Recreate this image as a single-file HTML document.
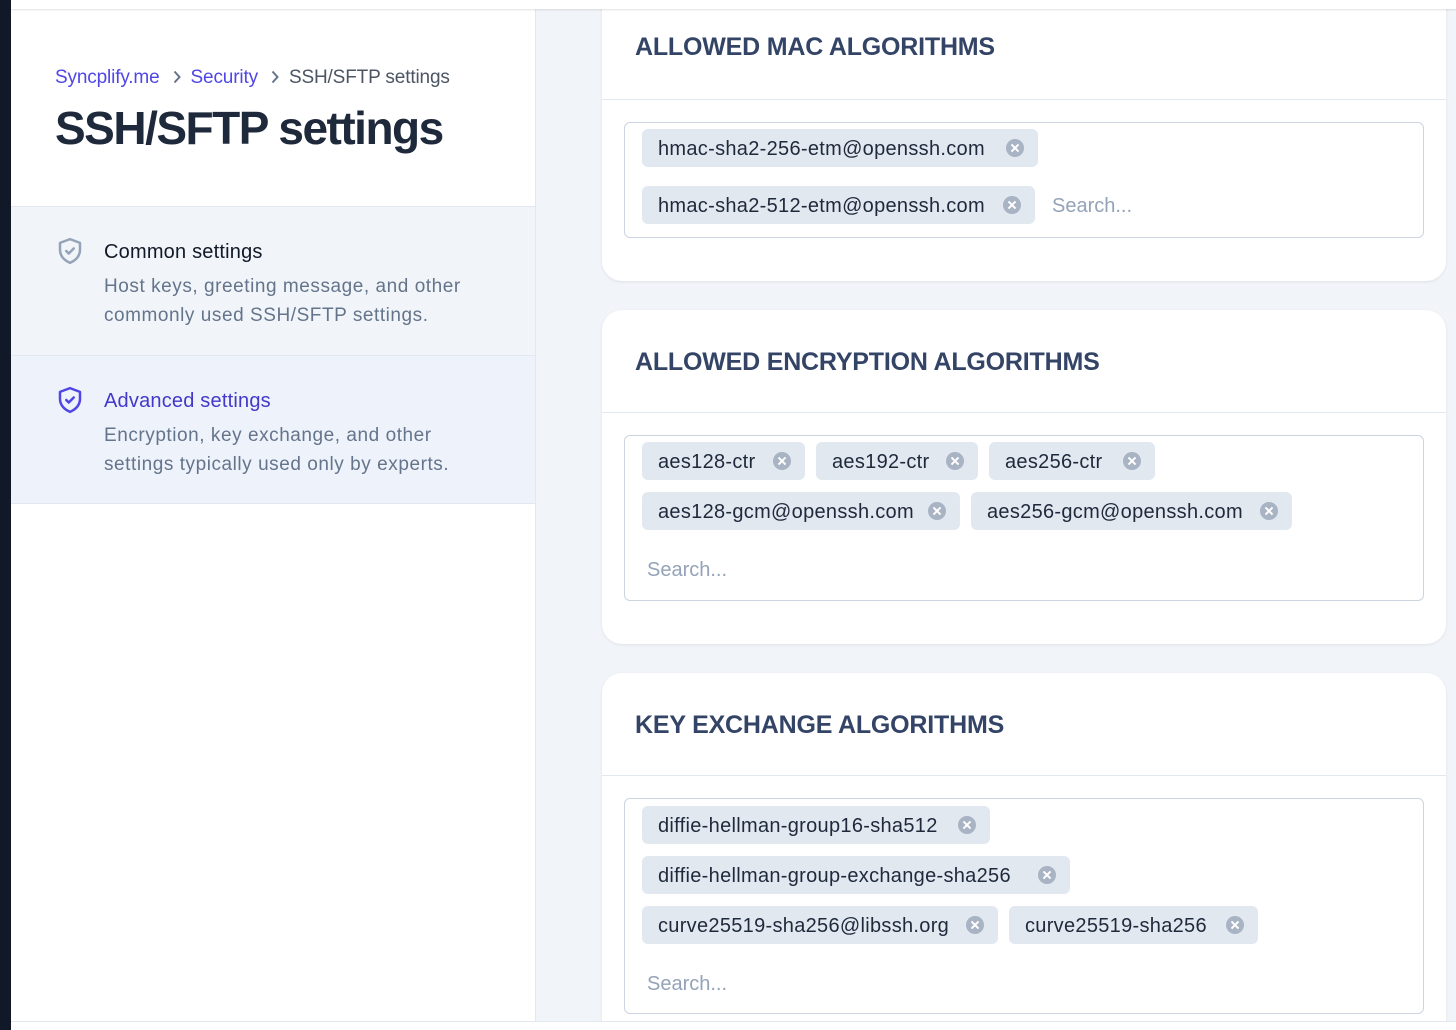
<!DOCTYPE html>
<html><head><meta charset="utf-8"><style>
*{box-sizing:border-box;margin:0;padding:0}
html,body{width:1456px;height:1030px;overflow:hidden}
body{background:#f1f5f9;font-family:"Liberation Sans",sans-serif;position:relative}
.abs{position:absolute}
.strip{left:0;top:0;width:11px;height:1030px;background:#111827;z-index:6}
.topbar{left:11px;top:0;width:1445px;height:9px;background:#fff;box-shadow:0 1px 2px rgba(0,0,0,.12);z-index:5}
.side{left:11px;top:9px;width:525px;height:1013px;background:#fff;border-right:1px solid #e2e8f0}
.bottom{left:11px;top:1021px;width:1445px;height:9px;background:#fff;border-top:1px solid #e2e8f0;z-index:5}
.crumb{left:55px;top:67px;font-size:19px;color:#4f46e5;letter-spacing:-.15px;white-space:nowrap}
.crumb svg{margin:0 10px 0 13px;vertical-align:-1px}
.crumb .cur{color:#4b5563}
h1{position:absolute;left:55px;top:101px;font-size:46px;font-weight:700;color:#1e293b;letter-spacing:-1.5px}
.nav{left:11px;width:524px;height:149px;border-top:1px solid #e2e8f0}
.nav .t{position:absolute;left:93px;top:34px;font-size:20px;letter-spacing:.2px}
.nav .d{position:absolute;left:93px;top:65px;font-size:19px;color:#64748b;line-height:29px;letter-spacing:.55px}
.nav svg{position:absolute;left:44px;top:29px}
.card{left:602px;width:844px;background:#fff;border-radius:20px;box-shadow:0 1px 3px rgba(0,0,0,.08);overflow:hidden}
.card h2{position:absolute;left:33px;font-size:25px;font-weight:700;color:#334466;letter-spacing:-.2px}
.card .hr{position:absolute;left:0;right:0;height:1px;background:#e2e8f0}
.box{position:absolute;left:22px;width:800px;border:1px solid #cbd5e1;border-radius:6px}
.chip{position:absolute;height:38px;background:#e2e8f0;border-radius:6px;font-size:20px;color:#1e293b;padding-left:16px;line-height:40px;white-space:nowrap;letter-spacing:.3px}
.chip i{position:absolute;right:14px;top:10px;width:18px;height:18px;border-radius:50%;background:#a8b3c3}
.chip i:before,.chip i:after{content:"";position:absolute;left:8px;top:4px;width:2px;height:10px;background:#fff;transform:rotate(45deg)}
.chip i:after{transform:rotate(-45deg)}
.search{position:absolute;font-size:20px;color:#94a3b8}
</style></head><body>
<div class="abs strip"></div>
<div class="abs topbar"></div>
<div class="abs side"></div>
<div class="abs crumb">Syncplify.me<svg width="8" height="14" viewBox="0 0 8 14"><path d="M1.5 1.5 6.5 7l-5 5.5" fill="none" stroke="#64748b" stroke-width="2"/></svg>Security<svg width="8" height="14" viewBox="0 0 8 14"><path d="M1.5 1.5 6.5 7l-5 5.5" fill="none" stroke="#64748b" stroke-width="2"/></svg><span class="cur">SSH/SFTP settings</span></div>
<h1>SSH/SFTP settings</h1>
<div class="abs nav" style="top:206px;background:#f1f5f9">
<svg width="30" height="30" viewBox="0 0 24 24" fill="none" stroke="#94a3b8" stroke-width="2" stroke-linecap="round" stroke-linejoin="round"><path d="M12 2.5 4 5.5v5.5c0 5 3.5 8.5 8 10.5 4.5-2 8-5.5 8-10.5V5.5z"/><path d="m9 12 2 2 4-4"/></svg>
<div class="t" style="color:#111827">Common settings</div>
<div class="d">Host keys, greeting message, and other<br>commonly used SSH/SFTP settings.</div></div>
<div class="abs nav" style="top:355px;background:#eef2fb;border-bottom:1px solid #e2e8f0">
<svg width="30" height="30" viewBox="0 0 24 24" fill="none" stroke="#4f46e5" stroke-width="2" stroke-linecap="round" stroke-linejoin="round"><path d="M12 2.5 4 5.5v5.5c0 5 3.5 8.5 8 10.5 4.5-2 8-5.5 8-10.5V5.5z"/><path d="m9 12 2 2 4-4"/></svg>
<div class="t" style="color:#4338ca">Advanced settings</div>
<div class="d">Encryption, key exchange, and other<br>settings typically used only by experts.</div></div>

<div class="abs card" style="top:-20px;height:301px">
<h2 style="top:53px">ALLOWED MAC ALGORITHMS</h2><div class="hr" style="top:119px"></div>
<div class="box" style="top:142px;height:116px"></div>
<div class="chip" style="left:40px;top:149px;width:396px">hmac-sha2-256-etm@openssh.com<i></i></div>
<div class="chip" style="left:40px;top:206px;width:393px">hmac-sha2-512-etm@openssh.com<i></i></div>
<div class="search" style="left:450px;top:215px">Search...</div>
</div>

<div class="abs card" style="top:310px;height:334px">
<h2 style="top:38px">ALLOWED ENCRYPTION ALGORITHMS</h2><div class="hr" style="top:102px"></div>
<div class="box" style="top:125px;height:166px"></div>
<div class="chip" style="left:40px;top:132px;width:163px">aes128-ctr<i></i></div>
<div class="chip" style="left:214px;top:132px;width:162px">aes192-ctr<i></i></div>
<div class="chip" style="left:387px;top:132px;width:166px">aes256-ctr<i></i></div>
<div class="chip" style="left:40px;top:182px;width:318px">aes128-gcm@openssh.com<i></i></div>
<div class="chip" style="left:369px;top:182px;width:321px">aes256-gcm@openssh.com<i></i></div>
<div class="search" style="left:45px;top:249px">Search...</div>
</div>

<div class="abs card" style="top:673px;height:349px;border-radius:20px 20px 0 0">
<h2 style="top:38px">KEY EXCHANGE ALGORITHMS</h2><div class="hr" style="top:102px"></div>
<div class="box" style="top:125px;height:216px"></div>
<div class="chip" style="left:40px;top:133px;width:348px">diffie-hellman-group16-sha512<i></i></div>
<div class="chip" style="left:40px;top:183px;width:428px">diffie-hellman-group-exchange-sha256<i></i></div>
<div class="chip" style="left:40px;top:233px;width:356px">curve25519-sha256@libssh.org<i></i></div>
<div class="chip" style="left:407px;top:233px;width:249px">curve25519-sha256<i></i></div>
<div class="search" style="left:45px;top:300px">Search...</div>
</div>
<div class="abs bottom"></div>
</body></html>
